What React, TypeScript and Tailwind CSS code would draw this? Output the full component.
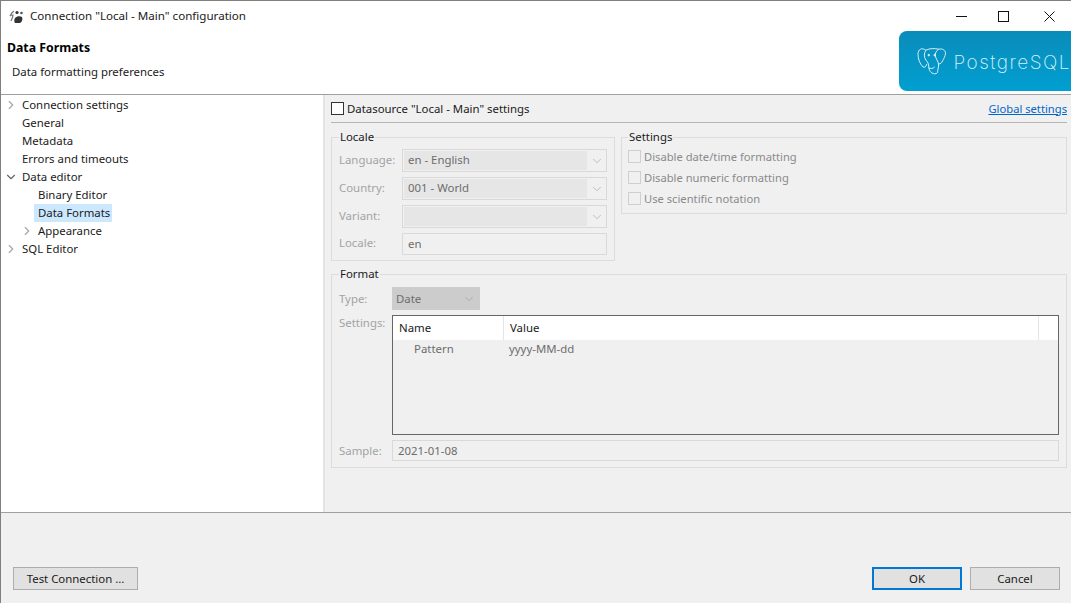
import { ChevronDown, ChevronRight } from "lucide-react";

const tree = [
  { label: "Connection settings", depth: 0, arrow: "right" },
  { label: "General", depth: 0 },
  { label: "Metadata", depth: 0 },
  { label: "Errors and timeouts", depth: 0 },
  { label: "Data editor", depth: 0, arrow: "down" },
  { label: "Binary Editor", depth: 1 },
  { label: "Data Formats", depth: 1, selected: true },
  { label: "Appearance", depth: 1, arrow: "right" },
  { label: "SQL Editor", depth: 0, arrow: "right" },
];

function TreeRow({ label, depth, arrow, selected }: { label: string; depth: number; arrow?: string; selected?: boolean }) {
  return (
    <div className={depth ? "flex h-[18px] items-center pl-[19px]" : "flex h-[18px] items-center pl-[3px]"}>
      <span className="flex w-[14px] justify-center text-[#a6a6a6]">
        {arrow === "right" && <ChevronRight size={14} strokeWidth={2} />}
        {arrow === "down" && <ChevronDown size={14} strokeWidth={2} className="text-[#666]" />}
      </span>
      <span className={selected ? "flex h-[18px] items-center bg-[#cce8ff] pr-[2px] pl-[4px]" : "px-[4px]"}>{label}</span>
    </div>
  );
}

function Combo({ value }: { value: string }) {
  return (
    <div className="flex h-[23px] w-[205px] items-center border border-[#d9d9d9] p-[1px]">
      <div className="flex h-[19px] w-[183px] items-center bg-[#e6e6e6] px-[4px] pb-[2px] text-[#6d6d6d]">{value}</div>
      <ChevronDown size={14} strokeWidth={1} className="ml-[3px] text-[#9a9a9a]" />
    </div>
  );
}

function FieldRow({ label, children }: { label: string; children: React.ReactNode }) {
  return (
    <div className="flex items-center">
      <span className="w-[63px] pb-[2px] text-[#a3a3a3]">{label}</span>
      {children}
    </div>
  );
}

function Check({ label }: { label: string }) {
  return (
    <div className="flex h-[21px] items-center gap-[3px] text-[11.2px] text-[#8a8a8a]">
      <span className="h-[13px] w-[13px] border border-[#cfcfcf]" />
      <span>{label}</span>
    </div>
  );
}

function Elephant() {
  return (
    <svg width="30" height="29" viewBox="0 0 30 29" fill="none" stroke="#d9f1fa" strokeWidth="1">
      <path d="M9 3C5 0 1 2 1 7c0 5 2 10 5 13 2 1 3 0 4-3" />
      <path d="M9 3c4-2 9-2 13-1" />
      <path d="M22 2c4-1 7 1 7 4 0 3-2 6-3 8-1 2-2 3-4 3" />
      <path d="M9 3c-2 3-2 7 0 10 2 2 3 4 3 7 0 3 2 7 6 7 2 0 3-1 3-2" />
      <path d="M22 2c-3 2-4 5-3 8 1 3 3 5 3 8 0 3-1 5-1 7" />
      <path d="M12 21c2 1 4 1 6-1" />
      <circle cx="18" cy="8" r="0.8" fill="#d9f1fa" />
      <circle cx="12" cy="8" r="0.8" fill="#d9f1fa" />
    </svg>
  );
}

function AppIcon() {
  return (
    <svg width="15" height="15" viewBox="0 0 15 15">
      <path d="M5 2C3 3 2 5 1 7c1-1 2-1 3-1 0 2-1 4-2 6" fill="none" stroke="#777" strokeWidth="1.2" />
      <path d="M6 9c2-2 5-2 7-1 1 2 0 5-2 6H6c-1-2-1-3 0-5z" fill="#333" />
      <circle cx="8" cy="3.5" r="1.6" fill="#333" />
      <circle cx="12.5" cy="4" r="1.3" fill="#555" />
    </svg>
  );
}

export default function App() {
  return (
    <div className="flex h-[603px] w-[1071px] flex-col overflow-hidden border-t border-l border-[#7f7f7f] bg-white text-[11.4px] leading-[16px] text-[#1a1a1a] [font-family:'Noto_Sans','Open_Sans',sans-serif]">
      <header className="h-[94px] shrink-0 border-b border-[#a0a0a0]">
        <div className="flex h-[30px] items-center pl-[8px]">
          <AppIcon />
          <span className="ml-[6px] flex-1 text-[11.6px]">Connection "Local - Main" configuration</span>
          <div className="flex items-center text-[#111]">
            <span className="mr-[31px] h-[1px] w-[11px] bg-[#111]" />
            <span className="mr-[35px] h-[11px] w-[11px] border border-[#111]" />
            <svg width="11" height="11" viewBox="0 0 11 11" className="mr-[16px]" stroke="#111" strokeWidth="1">
              <path d="M0.5 0.5l10 10M10.5 0.5l-10 10" />
            </svg>
          </div>
        </div>
        <div className="flex h-[60px] justify-between">
          <div className="pl-[6px]">
            <div className="pt-[9px] text-[12.3px] font-bold text-black">Data Formats</div>
            <div className="mt-[8px] pl-[5px]">Data formatting preferences</div>
          </div>
          <div className="flex h-[60px] w-[172px] items-center overflow-hidden rounded-l-[8px] bg-gradient-to-b from-[#0a8cba] to-[#009fd1] pl-[18px] text-[#d9f1fa]">
            <Elephant />
            <span className="mt-[3px] ml-[7px] text-[19px] font-extralight tracking-[1.5px] whitespace-nowrap [font-family:'Inter',sans-serif]">PostgreSQL</span>
          </div>
        </div>
      </header>

      <main className="flex h-[418px] shrink-0 border-b border-[#a0a0a0]">
        <nav className="w-[322px] shrink-0 pt-[1px]">
          {tree.map((item) => (
            <TreeRow key={item.label} {...item} />
          ))}
        </nav>
        <div className="w-[2px] shrink-0 bg-[#e3e3e3]" />
        <section className="flex-1 bg-[#f0f0f0] pr-[4px] pl-[6px]">
          <div className="flex h-[28px] items-center justify-between border-b border-[#b5b5b5]">
            <div className="flex items-center gap-[3px]">
              <span className="h-[13px] w-[13px] border border-[#333] bg-white" />
              <span>Datasource "Local - Main" settings</span>
            </div>
            <span className="text-[11.2px] text-[#0066cc] underline">Global settings</span>
          </div>

          <div className="mt-[6px] flex gap-[6px]">
            <fieldset className="h-[132px] w-[284px] shrink-0 border border-[#dcdcdc] pl-[7px]">
              <legend className="px-[1px]">Locale</legend>
              <div className="flex flex-col gap-[5px] pt-[4px]">
                <FieldRow label="Language:"><Combo value="en - English" /></FieldRow>
                <FieldRow label="Country:"><Combo value="001 - World" /></FieldRow>
                <FieldRow label="Variant:"><Combo value="" /></FieldRow>
                <FieldRow label="Locale:">
                  <div className="flex h-[22px] w-[205px] items-center border border-[#d9d9d9] px-[5px] text-[#6d6d6d]">en</div>
                </FieldRow>
              </div>
            </fieldset>
            <fieldset className="h-[85px] flex-1 border border-[#dcdcdc] pl-[6px]">
              <legend className="px-[1px]">Settings</legend>
              <div className="pt-[1px]">
                <Check label="Disable date/time formatting" />
                <Check label="Disable numeric formatting" />
                <Check label="Use scientific notation" />
              </div>
            </fieldset>
          </div>

          <fieldset className="mt-[5px] h-[202px] border border-[#dcdcdc] pr-[7px] pl-[7px]">
            <legend className="px-[1px]">Format</legend>
            <div className="flex items-center pt-[5px]">
              <span className="w-[53px] text-[#a3a3a3]">Type:</span>
              <div className="flex h-[23px] w-[88px] items-center justify-between bg-[#cccccc] pr-[4px] pl-[4px] text-[#6d6d6d]">
                Date
                <ChevronDown size={14} strokeWidth={1} className="text-[#9a9a9a]" />
              </div>
            </div>
            <div className="mt-[5px] flex">
              <span className="w-[53px] text-[#a3a3a3]">Settings:</span>
              <div className="h-[120px] flex-1 border border-[#666]">
                <div className="grid h-[24px] grid-cols-[111px_535px_1fr] items-center bg-white">
                  <span className="h-full border-r border-[#e5e5e5] pl-[6px] leading-[24px]">Name</span>
                  <span className="h-full border-r border-[#e5e5e5] pl-[6px] leading-[24px]">Value</span>
                  <span />
                </div>
                <div className="grid h-[18px] grid-cols-[111px_1fr] text-[#6d6d6d]">
                  <span className="pl-[21px] leading-[18px]">Pattern</span>
                  <span className="pl-[5px] leading-[18px]">yyyy-MM-dd</span>
                </div>
              </div>
            </div>
            <div className="mt-[5px] flex items-center">
              <span className="w-[53px] text-[#a3a3a3]">Sample:</span>
              <div className="flex h-[21px] flex-1 items-center border border-[#d9d9d9] px-[5px] text-[#6d6d6d]">2021-01-08</div>
            </div>
          </fieldset>
        </section>
      </main>

      <footer className="flex flex-1 items-start justify-between bg-[#f0f0f0] pt-[54px] pr-[11px] pl-[12px]">
        <button className="h-[23px] w-[125px] border border-[#adadad] bg-[#e1e1e1]">Test Connection ...</button>
        <div className="flex gap-[8px]">
          <button className="h-[23px] w-[90px] border-2 border-[#0078d7] bg-[#e1e1e1]">OK</button>
          <button className="h-[23px] w-[90px] border border-[#adadad] bg-[#e1e1e1]">Cancel</button>
        </div>
      </footer>
    </div>
  );
}
